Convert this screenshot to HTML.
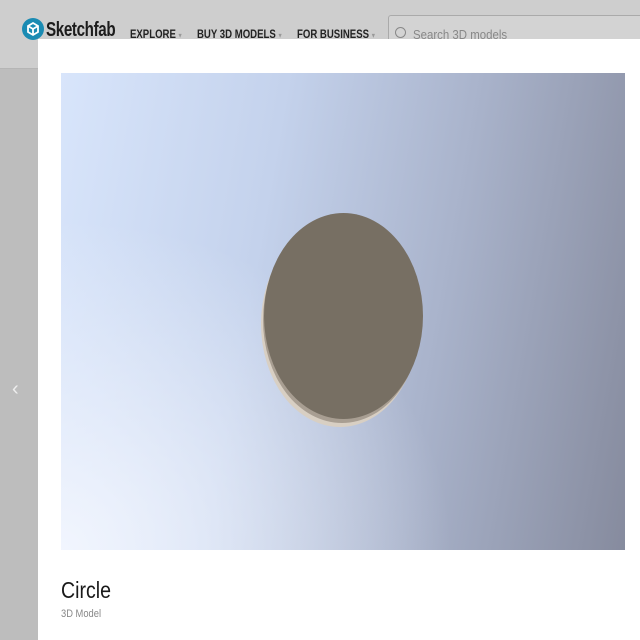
<!DOCTYPE html>
<html><head><meta charset="utf-8"><style>
html,body{margin:0;padding:0;width:640px;height:640px;overflow:hidden;font-family:"Liberation Sans",sans-serif;background:#bdbdbd;position:relative}
.hdr{position:absolute;left:0;top:0;width:640px;height:68px;background:#cecece;border-bottom:1px solid #b5b5b5}
.logo{position:absolute;left:22px;top:18px;width:22px;height:22px;border-radius:50%;background:#1a8bb3}
.brand{position:absolute;left:46px;top:19px;font-size:20px;color:#1c1c1c;font-weight:bold;letter-spacing:-0.5px;transform:scaleX(.76);transform-origin:left}
.nav{position:absolute;top:27px;font-size:12px;font-weight:bold;color:#222;transform:scaleX(.8);transform-origin:left}
.nav span{color:#999;font-weight:normal;font-size:8px}
.search{position:absolute;left:388px;top:15px;width:260px;height:38px;border:1px solid #aaa;border-radius:3px;background:#d3d3d3}
.search div{position:absolute;left:24px;top:11px;font-size:13px;color:#888;transform:scaleX(.88);transform-origin:left}
.search i{position:absolute;left:6px;top:11px;width:9px;height:9px;border:1.5px solid #888;border-radius:50%}
.modal{position:absolute;left:38px;top:39px;width:602px;height:601px;background:#fff}
.viewer{position:absolute;left:23px;top:34px;width:564px;height:477px;background:linear-gradient(100deg,#d8e5fb 0%,#c4d2ec 35%,#a9b3cb 65%,#868b9e 100%);overflow:hidden}
.viewer::before{content:"";position:absolute;left:0;bottom:0;width:70%;height:70%;background:radial-gradient(ellipse at 0% 100%,rgba(245,248,255,.9),rgba(245,248,255,0) 70%)}
.title{position:absolute;left:23px;top:538px;font-size:23px;color:#1a1a1a;transform:scaleX(.85);transform-origin:left}
.sub{position:absolute;left:23px;top:569px;font-size:11px;color:#888;transform:scaleX(.85);transform-origin:left}
.arrow{position:absolute;left:12px;top:378px;font-size:20px;color:#eee}
</style></head><body>
<div class="hdr">
<div class="logo"><svg width="22" height="22" viewBox="0 0 22 22"><path d="M11 5 L16 8 L16 14 L11 17 L6 14 L6 8 Z M6 8 L11 11 L16 8 M11 11 V17" fill="none" stroke="#fff" stroke-width="1.8"/></svg></div>
<div class="brand">Sketchfab</div>
<div class="nav" style="left:130px">EXPLORE <span>▾</span></div>
<div class="nav" style="left:197px">BUY 3D MODELS <span>▾</span></div>
<div class="nav" style="left:297px">FOR BUSINESS <span>▾</span></div>
<div class="search"><i></i><div>Search 3D models</div></div>
</div>
<div class="arrow">‹</div>
<div class="modal">
<div class="viewer">
<svg width="564" height="477" style="position:absolute;left:0;top:0">
<ellipse cx="279" cy="251" rx="79" ry="103" fill="#d8cfc3"/>
<ellipse cx="281" cy="247" rx="79" ry="103" fill="#a89e92"/>
<ellipse cx="282.5" cy="243" rx="79.5" ry="103" fill="#776f63"/>
</svg>
</div>
<div class="title">Circle</div>
<div class="sub">3D Model</div>
</div>
</body></html>
